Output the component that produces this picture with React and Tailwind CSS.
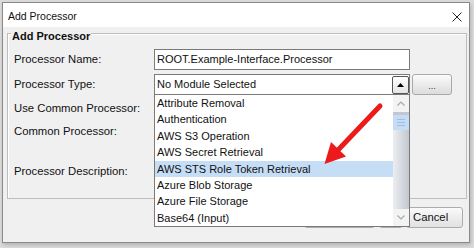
export default function App() {
  const items = [
    "Attribute Removal",
    "Authentication",
    "AWS S3 Operation",
    "AWS Secret Retrieval",
    "AWS STS Role Token Retrieval",
    "Azure Blob Storage",
    "Azure File Storage",
    "Base64 (Input)",
  ];
  return (
    <div className="relative w-[474px] h-[248px] overflow-hidden bg-[#dcdcdc] pl-[2px] pt-[2px] font-['Liberation_Sans',Arial,sans-serif] text-[#111]">
      <div className="w-[468px] h-[241px] border border-[#8a8a8a] flex flex-col bg-[#f0f0f0] shadow-[1px_2px_4px_rgba(0,0,0,0.2)]">
        {/* title bar */}
        <div className="h-[24px] shrink-0 bg-white flex items-start pt-[8px] pl-[5px] pr-[7px]">
          <span className="text-[10.5px] leading-[11px]">Add Processor</span>
          <svg className="ml-auto mt-[1px]" width="10" height="10" viewBox="0 0 10 10">
            <path d="M0.5 0.5L9.5 9.5M9.5 0.5L0.5 9.5" stroke="#222" strokeWidth="1" fill="none" />
          </svg>
        </div>

        {/* body */}
        <div className="flex-1 flex flex-col pt-[6px] pl-[4px] pr-[2px]">
          {/* group box */}
          <div className="relative w-[460px] h-[166px] shrink-0 border border-[#bdbdbd] shadow-[inset_1px_1px_0_#ffffff] flex flex-col pt-[15px] pl-[6px]">
            <span className="absolute left-[3px] top-[-4px] px-[1px] bg-[#f0f0f0] font-bold text-[11px] leading-[13px]">
              Add Processor
            </span>

            {/* row 1 */}
            <div className="flex items-center h-[21px]">
              <div className="w-[140px] text-[11.3px]">Processor Name:</div>
              <div className="w-[256px] h-[21px] border border-[#7a7a7a] bg-white flex items-center pl-[2px] text-[11px]">
                ROOT.Example-Interface.Processor
              </div>
            </div>

            {/* row 2 */}
            <div className="flex items-center h-[21px] mt-[4px]">
              <div className="w-[140px] text-[11.3px]">Processor Type:</div>
              <div className="relative z-10 w-[256px] h-[21px]">
                <div className="w-[256px] h-[21px] border border-[#7a7a7a] bg-white flex items-center pl-[2px] text-[11px]">
                  <span>No Module Selected</span>
                  <div className="ml-auto w-[17px] h-[18px] border border-[#555] rounded-[2px] bg-gradient-to-b from-[#ffffff] to-[#e4e4e4] flex items-center justify-center">
                    <svg width="7" height="4" viewBox="0 0 7 4">
                      <path d="M0 4L3.5 0L7 4Z" fill="#000" />
                    </svg>
                  </div>
                </div>

                {/* dropdown list (overlay) */}
                <div className="absolute left-0 top-[20px] w-[256px] border border-[#7a7a7a] bg-white flex">
                  <div className="flex-1 flex flex-col">
                    {items.map((t, i) => (
                      <div
                        key={t}
                        className={
                          i === 4
                            ? "h-[16.4px] flex items-center pl-[2px] text-[11px] bg-[#c6ddf6]"
                            : "h-[16.4px] flex items-center pl-[2px] text-[11px]"
                        }
                      >
                        {t}
                      </div>
                    ))}
                  </div>
                  <div className="w-[16px] flex flex-col bg-[#f3f3f3]">
                    <div className="h-[17px] flex items-center justify-center">
                      <svg width="8" height="5" viewBox="0 0 8 5">
                        <path d="M0.5 4.5L4 1L7.5 4.5" stroke="#a9a9a9" strokeWidth="1.2" fill="none" />
                      </svg>
                    </div>
                    <div className="h-[3px] bg-[#c3c7ce]" />
                    <div className="h-[15px] bg-[#c4dcf6] flex flex-col items-center justify-center gap-[2px]">
                      <div className="w-[8px] h-[1px] bg-[#9fbde0]" />
                      <div className="w-[8px] h-[1px] bg-[#9fbde0]" />
                      <div className="w-[8px] h-[1px] bg-[#9fbde0]" />
                    </div>
                    <div className="flex-1 bg-gradient-to-r from-[#eceef1] to-[#c3c7cf]" />
                    <div className="h-[17px] flex items-center justify-center">
                      <svg width="8" height="5" viewBox="0 0 8 5">
                        <path d="M0.5 0.5L4 4L7.5 0.5" stroke="#a9a9a9" strokeWidth="1.2" fill="none" />
                      </svg>
                    </div>
                  </div>
                </div>
              </div>
              <div className="ml-[2px] w-[40px] h-[21px] border border-[#a9a9a9] rounded-[3px] bg-gradient-to-b from-[#fbfbfb] to-[#dcdcdc] flex items-center justify-center text-[9px] leading-none pt-[4px] text-[#333]">
                ...
              </div>
            </div>

            {/* row 3 */}
            <div className="flex items-center h-[24px] mt-[1px]">
              <div className="w-[140px] text-[11.3px]">Use Common Processor:</div>
            </div>

            {/* row 4 */}
            <div className="flex items-center h-[23px]">
              <div className="w-[140px] text-[11.3px]">Common Processor:</div>
            </div>

            {/* row 5 */}
            <div className="flex items-center h-[50px] mt-[3px]">
              <div className="w-[140px] text-[11.3px]">Processor Description:</div>
            </div>
          </div>

          {/* buttons */}
          <div className="flex justify-end items-center h-[21px] mt-[8px] pr-[4px]">
            <div className="w-[71px] h-[21px] border border-[#acacac] rounded-[3px] bg-gradient-to-b from-[#fafafa] to-[#e1e1e1]" />
            <div className="ml-[4px] w-[24px] h-[21px] border border-[#acacac] rounded-[3px] bg-gradient-to-b from-[#fafafa] to-[#e1e1e1]" />
            <div className="ml-[3px] w-[57px] h-[21px] border border-[#acacac] rounded-[3px] bg-gradient-to-b from-[#fafafa] to-[#e1e1e1] flex items-center pl-[6px] text-[11.3px]">
              Cancel
            </div>
          </div>
        </div>
      </div>

      {/* red annotation arrow */}
      <svg className="absolute inset-0 pointer-events-none z-20" width="474" height="248" viewBox="0 0 474 248">
        <line x1="380" y1="106" x2="339" y2="149" stroke="#ec1a1a" strokeWidth="5" strokeLinecap="round" />
        <polygon points="324.5,164 346,156.5 331,142" fill="#ec1a1a" />
      </svg>
    </div>
  );
}
